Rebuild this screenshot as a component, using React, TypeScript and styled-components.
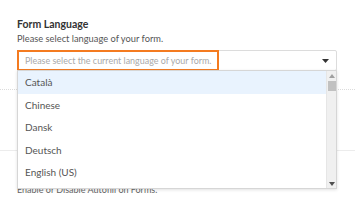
import React from "react";
import styled, { createGlobalStyle } from "styled-components";

const Global = createGlobalStyle`
  html, body { margin: 0; padding: 0; background: #fff; }
  body { font-family: Lato, "Open Sans", "Liberation Sans", sans-serif; }
  * { box-sizing: border-box; }
`;

const Page = styled.div`
  width: 355px;
  height: 200px;
  overflow: hidden;
  position: relative;
  background: #fff;
`;

const Section = styled.div`
  padding: 17px 18px 0 17px;
  position: relative;
`;

const Title = styled.div`
  font-size: 10.5px;
  font-weight: 700;
  color: #333;
  line-height: 14px;
`;

const Subtitle = styled.div`
  font-size: 9.3px;
  color: #555;
  line-height: 12px;
  margin-top: 2px;
`;

const SelectWrap = styled.div`
  position: relative;
  margin-top: 5px;
  width: 320px;
`;

const SelectBox = styled.div`
  height: 21px;
  border: 1px solid #dcdcdc;
  border-radius: 2px;
  display: flex;
  align-items: stretch;
  justify-content: space-between;
  background: #fff;
`;

const Highlight = styled.span`
  display: inline-flex;
  align-items: center;
  margin: -1px 0 -1px -1px;
  padding: 0 6px;
  border: 2px solid #f47b20;
  font-size: 8.95px;
  color: #a9a9a9;
  white-space: nowrap;
`;

const Caret = styled.span`
  display: flex;
  align-items: center;
  padding-right: 7px;
`;

const Dropdown = styled.div`
  position: absolute;
  top: 20px;
  left: 0;
  width: 320px;
  height: 119px;
  background: #fff;
  border: 1px solid #d6d6d6;
  box-shadow: 0 1px 3px rgba(0, 0, 0, 0.12);
  display: flex;
  z-index: 2;
`;

const List = styled.div`
  flex: 1;
  overflow: hidden;
`;

const Item = styled.div<{ $active?: boolean }>`
  height: 22.5px;
  display: flex;
  align-items: center;
  padding-left: 7px;
  font-size: 10px;
  color: #555;
  background: ${(p) => (p.$active ? "#e9f3fe" : "#fff")};
`;

const Scrollbar = styled.div`
  width: 10px;
  background: #f0f0f0;
  display: flex;
  flex-direction: column;
  align-items: center;
  border-left: 1px solid #e6e6e6;
`;

const Arrow = styled.div`
  height: 9px;
  display: flex;
  align-items: center;
  justify-content: center;
`;

const Thumb = styled.div`
  width: 8px;
  height: 10px;
  background: #c1c1c1;
  margin-top: 1px;
`;

const Spacer = styled.div`
  flex: 1;
`;

const DottedRule = styled.div`
  margin-top: 18px;
  border-top: 1px dotted #dcdcdc;
`;

const SolidRule = styled.div`
  margin-top: 60px;
  border-top: 1px solid #ececec;
`;

const Lower = styled.div`
  padding: 0 17px;
`;

const Hint = styled.div`
  margin-top: 33px;
  font-size: 9px;
  color: #666;
  line-height: 12px;
`;

const Tri = ({ up, color = "#555" }: { up?: boolean; color?: string }) => (
  <svg width="6" height="4" viewBox="0 0 6 4">
    <path d={up ? "M0 4 L3 0 L6 4 Z" : "M0 0 L6 0 L3 4 Z"} fill={color} />
  </svg>
);

const languages = ["Català", "Chinese", "Dansk", "Deutsch", "English (US)"];

export default function App() {
  return (
    <Page>
      <Global />
      <Section>
        <Title>Form Language</Title>
        <Subtitle>Please select language of your form.</Subtitle>
        <SelectWrap>
          <SelectBox>
            <Highlight>Please select the current language of your form.</Highlight>
            <Caret>
              <svg width="7" height="4" viewBox="0 0 7 4">
                <path d="M0 0 L7 0 L3.5 4 Z" fill="#333" />
              </svg>
            </Caret>
          </SelectBox>
          <Dropdown>
            <List>
              {languages.map((l, i) => (
                <Item key={l} $active={i === 0}>
                  {l}
                </Item>
              ))}
            </List>
            <Scrollbar>
              <Arrow>
                <Tri up color="#a0a0a0" />
              </Arrow>
              <Thumb />
              <Spacer />
              <Arrow>
                <Tri color="#505050" />
              </Arrow>
            </Scrollbar>
          </Dropdown>
        </SelectWrap>
      </Section>
      <DottedRule />
      <SolidRule />
      <Lower>
        <Hint>Enable or Disable Autofill on Forms.</Hint>
      </Lower>
    </Page>
  );
}
